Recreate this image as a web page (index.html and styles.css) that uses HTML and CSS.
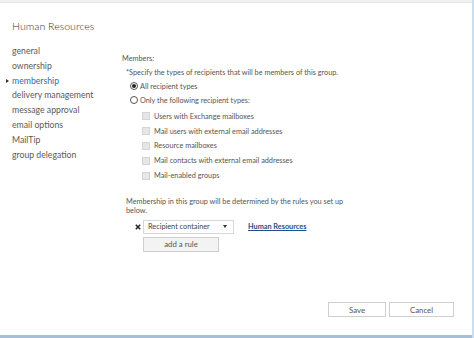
FILE: index.html
```html
<!DOCTYPE html>
<html lang="en">
<head>
    <meta charset="UTF-8">
    <title>Human Resources</title>
    <link rel="stylesheet" href="styles.css">
</head>
<body>
    <div class="window">
        <div class="top-strip"></div>
        <div class="dialog">
            <h1 class="title">Human Resources</h1>
            <div class="layout">
                <ul class="nav">
                    <li>general</li>
                    <li>ownership</li>
                    <li class="active">membership</li>
                    <li>delivery management</li>
                    <li>message approval</li>
                    <li>email options</li>
                    <li>MailTip</li>
                    <li>group delegation</li>
                </ul>
                <div class="panel">
                    <div class="label">Members:</div>
                    <div class="hint">*Specify the types of recipients that will be members of this group.</div>
                    <div class="radio-row"><span class="radio checked"></span>All recipient types</div>
                    <div class="radio-row"><span class="radio"></span>Only the following recipient types:</div>
                    <div class="checks">
                        <div class="check-row"><span class="box"></span>Users with Exchange mailboxes</div>
                        <div class="check-row"><span class="box"></span>Mail users with external email addresses</div>
                        <div class="check-row"><span class="box"></span>Resource mailboxes</div>
                        <div class="check-row"><span class="box"></span>Mail contacts with external email addresses</div>
                        <div class="check-row"><span class="box"></span>Mail-enabled groups</div>
                    </div>
                    <p class="rules-note">Membership in this group will be determined by the rules you set up below.</p>
                    <div class="rule-row">
                        <svg class="remove" width="6" height="6" viewBox="0 0 6 6">
                            <path d="M0.8 0.8L5.2 5.2M5.2 0.8L0.8 5.2" stroke="#222" stroke-width="1.5"/>
                        </svg>
                        <div class="select">
                            <span>Recipient container</span>
                            <span class="caret"></span>
                        </div>
                        <a class="rule-value" href="#">Human Resources</a>
                    </div>
                    <button class="btn add-rule">add a rule</button>
                </div>
            </div>
            <div class="actions">
                <button class="btn action">Save</button>
                <button class="btn action cancel">Cancel</button>
            </div>
        </div>
        <div class="bottom-strip"></div>
    </div>
</body>
</html>
```

FILE: styles.css
```css
* {
    box-sizing: border-box;
}
html, body {
    margin: 0;
    padding: 0;
    background: #fff;
}
body {
    font-family: Lato, "Open Sans", sans-serif;
    color: #444;
    width: 474px;
    height: 338px;
    overflow: hidden;
}
.window {
    height: 338px;
    display: flex;
    flex-direction: column;
    border-right: 2px solid #c9def0;
}
.top-strip {
    height: 3px;
    background: #f1f1f1;
    border-bottom: 1px solid #e4e4e4;
}
.dialog {
    flex: 1;
    display: flex;
    flex-direction: column;
    padding: 16px 0 0 12px;
}
.title {
    margin: 0;
    font-size: 10.6px;
    font-weight: 300;
    color: #333;
    line-height: 14px;
}
.layout {
    display: flex;
    margin-top: 11px;
}
.nav {
    list-style: none;
    margin: 0;
    padding: 0;
    width: 110px;
    font-size: 8.7px;
    line-height: 14.8px;
    color: #5a5a5a;
}
.nav li {
    position: relative;
    white-space: nowrap;
}
.nav .active {
    color: #2a6db5;
}
.nav .active::before {
    content: "";
    position: absolute;
    left: -6px;
    top: 5px;
    border-left: 3px solid #333;
    border-top: 2.5px solid transparent;
    border-bottom: 2.5px solid transparent;
}
.panel {
    padding-top: 9px;
    font-size: 7.3px;
    color: #555;
    width: 240px;
}
.label {
    line-height: 12px;
    margin-bottom: 2px;
}
.hint {
    padding-left: 4px;
    line-height: 12px;
}
.radio-row {
    display: flex;
    align-items: center;
    height: 14px;
    padding-left: 8px;
}
.radio {
    width: 8px;
    height: 8px;
    border: 1px solid #555;
    border-radius: 50%;
    margin-right: 2px;
    position: relative;
}
.radio.checked::after {
    content: "";
    position: absolute;
    left: 1px;
    top: 1px;
    width: 4px;
    height: 4px;
    border-radius: 50%;
    background: #222;
}
.checks {
    padding-left: 20px;
    padding-top: 2px;
}
.check-row {
    display: flex;
    align-items: center;
    height: 14.8px;
}
.box {
    width: 8px;
    height: 8px;
    background: #e6e6e6;
    border: 1px solid #d4d4d4;
    margin-right: 4px;
}
.rules-note {
    margin: 14px 0 0 4px;
    line-height: 9.5px;
    width: 230px;
}
.rule-row {
    display: flex;
    align-items: center;
    margin-top: 4px;
    padding-left: 13px;
}
.remove {
    margin-right: 2px;
}
.select {
    width: 91px;
    height: 14px;
    border: 1px solid #d8d8d8;
    display: flex;
    align-items: center;
    justify-content: space-between;
    padding: 0 6px 0 4px;
    color: #444;
}
.caret {
    border-top: 3px solid #333;
    border-left: 2.5px solid transparent;
    border-right: 2.5px solid transparent;
}
.rule-value {
    margin-left: 14px;
    color: #1f4e85;
    font-weight: 700;
    text-decoration: underline;
}
.btn {
    font-family: inherit;
    font-size: 7.8px;
    color: #555;
    background: #f6f6f6;
    border: 1px solid #cfcfcf;
    padding: 0;
    height: 15px;
}
.add-rule {
    margin-left: 21px;
    margin-top: 3px;
    width: 76px;
    background: #f3f3f3;
}
.actions {
    margin-top: auto;
    display: flex;
    justify-content: flex-end;
    gap: 3px;
    padding-right: 18px;
    padding-bottom: 18px;
}
.action {
    width: 58px;
    background: #fff;
}
.cancel {
    width: 65px;
}
.bottom-strip {
    height: 3px;
    background: #a6bfd6;
}
```
